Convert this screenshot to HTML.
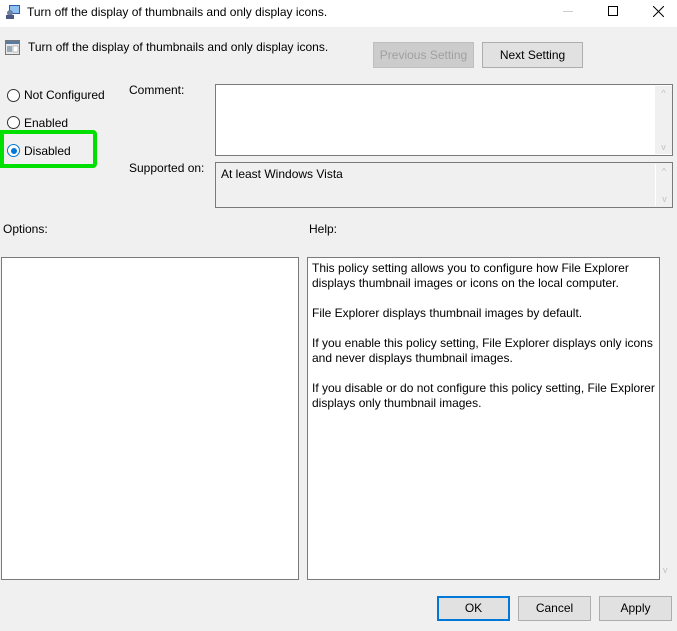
<!DOCTYPE html>
<html><head><style>
*{box-sizing:border-box;margin:0;padding:0}
body{width:677px;height:631px;background:#f0f0f0;font-family:"Liberation Sans",sans-serif;font-size:12px;color:#000;position:relative;overflow:hidden}
.a{position:absolute}
.btn{position:absolute;border:1px solid #adadad;background:#e1e1e1;text-align:center;line-height:24px;font-size:12px}
.radio{position:absolute;width:13px;height:13px;border:1px solid #333;border-radius:50%;background:#fff}
.sb{position:absolute;right:0;width:17px;color:#c0c0c0;font-size:9px;text-align:center}
</style></head><body>
<div class="a" style="left:0;top:0;width:677px;height:27px;background:#fff"></div>
<svg class="a" style="left:5px;top:4px" width="16" height="16"><rect x="4" y="1" width="11" height="9" fill="#2a5db0"/><rect x="5" y="2" width="9" height="7" fill="#8ec1f0"/><circle cx="5" cy="9" r="3" fill="#6b7fa3"/><rect x="1" y="11" width="8" height="4" fill="#4a5a80"/></svg>
<div class="a" style="left:27px;top:5px">Turn off the display of thumbnails and only display icons.</div>
<div class="a" style="left:563px;top:11px;width:10px;height:1px;background:#ccc"></div>
<div class="a" style="left:608px;top:6px;width:10px;height:10px;border:1px solid #000"></div>
<svg class="a" style="left:653px;top:6px" width="11" height="11"><path d="M0 0L11 11M11 0L0 11" stroke="#000" stroke-width="1"/></svg>
<svg class="a" style="left:5px;top:40px" width="15" height="15"><rect x="0.5" y="0.5" width="14" height="14" fill="#e8e8e8" stroke="#777"/><rect x="1" y="1" width="13" height="3" fill="#5a7aa0"/><rect x="2" y="6" width="5" height="6" fill="#9ab"/><rect x="8" y="6" width="5" height="6" fill="#fff" stroke="#888" stroke-width=".5"/></svg>
<div class="a" style="left:28px;top:40px">Turn off the display of thumbnails and only display icons.</div>
<div class="btn" style="left:373px;top:42px;width:101px;height:26px;background:#cccccc;border-color:#bfbfbf;color:#a0a0a0">Previous Setting</div>
<div class="btn" style="left:482px;top:42px;width:101px;height:26px">Next Setting</div>
<div class="radio" style="left:7px;top:89px"></div><div class="a" style="left:24px;top:88px">Not Configured</div>
<div class="radio" style="left:7px;top:116px"></div><div class="a" style="left:24px;top:116px">Enabled</div>
<div class="a" style="left:0;top:130px;width:97px;height:38px;border:4px solid #00e000;border-radius:0 4px 4px 0"></div>
<div class="radio" style="left:7px;top:144px;border-color:#0078d7"></div><div class="a" style="left:10.5px;top:147.5px;width:6px;height:6px;border-radius:50%;background:#0078d7"></div>
<div class="a" style="left:24px;top:144px">Disabled</div>
<div class="a" style="left:129px;top:83px">Comment:</div>
<div class="a" style="left:215px;top:84px;width:458px;height:72px;border:1px solid #7a7a7a;background:#fff"><div class="sb" style="top:1px;height:68px;background:#f0f0f0"><div style="margin-top:2px">&#94;</div><div style="position:absolute;bottom:2px;width:17px">v</div></div></div>
<div class="a" style="left:129px;top:161px">Supported on:</div>
<div class="a" style="left:215px;top:162px;width:458px;height:46px;border:1px solid #7a7a7a;background:#f0f0f0"><div class="a" style="left:5px;top:4px">At least Windows Vista</div><div class="sb" style="top:1px;height:42px;border-left:1px solid #fff"><div style="margin-top:2px">&#94;</div><div style="position:absolute;bottom:2px;width:17px">v</div></div></div>
<div class="a" style="left:3px;top:222px">Options:</div>
<div class="a" style="left:309px;top:222px">Help:</div>
<div class="a" style="left:1px;top:257px;width:298px;height:323px;border:1px solid #7a7a7a;background:#fff"></div>
<div class="a" style="left:307px;top:257px;width:353px;height:323px;border:1px solid #7a7a7a;background:#fff;padding:3px 4px;line-height:15px">This policy setting allows you to configure how File Explorer displays thumbnail images or icons on the local computer.<br><br>File Explorer displays thumbnail images by default.<br><br>If you enable this policy setting, File Explorer displays only icons and never displays thumbnail images.<br><br>If you disable or do not configure this policy setting, File Explorer displays only thumbnail images.</div>
<div class="a" style="left:663px;top:565px;color:#c0c0c0;font-size:9px">v</div>
<div class="btn" style="left:437px;top:596px;width:73px;height:25px;border:2px solid #0078d7;line-height:21px">OK</div>
<div class="btn" style="left:518px;top:596px;width:73px;height:25px;line-height:23px">Cancel</div>
<div class="btn" style="left:599px;top:596px;width:73px;height:25px;line-height:23px">Apply</div>
</body></html>
